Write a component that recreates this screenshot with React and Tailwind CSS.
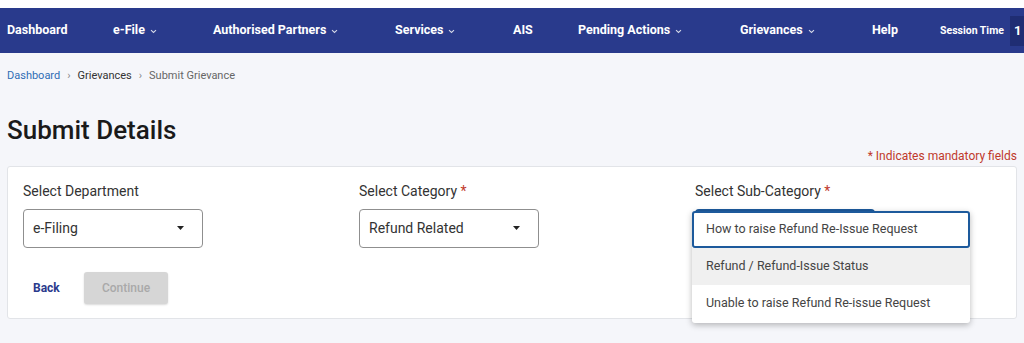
import React from "react";

const NAV = [
  { label: "Dashboard", x: "w-[106px]" },
  { label: "e-File", caret: true, x: "w-[100px]" },
  { label: "Authorised Partners", caret: true, x: "w-[182px]" },
  { label: "Services", caret: true, x: "w-[118px]" },
  { label: "AIS", x: "w-[65px]" },
  { label: "Pending Actions", caret: true, x: "w-[162px]" },
  { label: "Grievances", caret: true, x: "w-[132px]" },
  { label: "Help", x: "w-[68px]" },
];

function Caret() {
  return (
    <svg width="7" height="5" viewBox="0 0 7 5" className="ml-[5px] mt-[1px] opacity-80">
      <path d="M1 1.2l2.5 2.2L6 1.2" fill="none" stroke="currentColor" strokeWidth="1.1" />
    </svg>
  );
}

function SelectBox({ value }) {
  return (
    <div className="flex h-[39px] w-[180px] items-center justify-between rounded-[4px] border border-[#8f8f8f] bg-white pl-[9px] pr-[18px] text-[14px] text-[#333]">
      <span>{value}</span>
      <svg width="7" height="4" viewBox="0 0 7 4">
        <path d="M0 0h7L3.5 4z" fill="#222" />
      </svg>
    </div>
  );
}

export default function App() {
  return (
    <div className="h-[343px] w-[1024px] overflow-hidden bg-[#f5f6fa] font-['Roboto',sans-serif]">
      <div className="h-[8px] bg-white" />
      {/* top nav */}
      <nav className="flex h-[45px] items-center bg-[#293a8c] pl-[7px] text-[12.5px] font-bold text-white">
        {NAV.map((n) => (
          <div key={n.label} className={`flex shrink-0 items-center ${n.x}`}>
            <span>{n.label}</span>
            {n.caret && <Caret />}
          </div>
        ))}
        <span className="shrink-0 text-[10.5px]">Session Time</span>
        <span className="ml-[6px] flex h-[30px] shrink-0 items-center bg-[#1f2d73] px-[4px] text-[13px]">1</span>
      </nav>

      {/* breadcrumb */}
      <div className="flex items-center gap-[7px] pl-[7px] pt-[15px] text-[11px]">
        <span className="text-[#2f6db5]">Dashboard</span>
        <span className="text-[#888]">›</span>
        <span className="text-[#333]">Grievances</span>
        <span className="text-[#888]">›</span>
        <span className="text-[#666]">Submit Grievance</span>
      </div>

      <h1 className="pl-[7px] pt-[30px] text-[26px] font-medium leading-[30px] text-[#1a1a1a]">Submit Details</h1>

      <div className="flex justify-end pr-[7px] pt-[3px] text-[12px] leading-[16px] text-[#c0392b]">
        * Indicates mandatory fields
      </div>

      {/* card */}
      <div className="mx-[7px] mt-[2px] h-[153px] rounded-[3px] border border-[#e2e4e8] bg-white pl-[15px] pt-[14px]">
        <div className="grid grid-cols-[336px_336px_1fr]">
          <div>
            <div className="mb-[8px] text-[14px] leading-[20px] text-[#333]">Select Department</div>
            <SelectBox value="e-Filing" />
          </div>
          <div>
            <div className="mb-[8px] text-[14px] leading-[20px] text-[#333]">
              Select Category <span className="text-[#c0392b]">*</span>
            </div>
            <SelectBox value="Refund Related" />
          </div>
          <div>
            <div className="mb-[8px] text-[14px] leading-[20px] text-[#333]">
              Select Sub-Category <span className="text-[#c0392b]">*</span>
            </div>
            <div className="relative">
              <div className="h-[39px] w-[180px] rounded-[4px] border-2 border-[#1d5a9c] bg-white" />
              {/* open listbox */}
              <div className="absolute left-[-3px] top-[2px] z-10 w-[278px] rounded-[3px] bg-white text-[12.5px] text-[#444] shadow-[0_2px_6px_rgba(0,0,0,0.28)]">
                <div className="flex h-[37px] items-center rounded-[3px] border-2 border-[#1d5a9c] pl-[12px]">
                  How to raise Refund Re-Issue Request
                </div>
                <div className="flex h-[37px] items-center bg-[#f0f0f0] pl-[14px]">Refund / Refund-Issue Status</div>
                <div className="flex h-[38px] items-center pl-[14px]">Unable to raise Refund Re-issue Request</div>
              </div>
            </div>
          </div>
        </div>

        <div className="mt-[24px] flex items-center">
          <span className="ml-[10px] w-[51px] text-[12px] font-bold text-[#2b3a8c]">Back</span>
          <button className="h-[32px] w-[84px] rounded-[3px] bg-[#d6d6d6] text-[12px] font-medium text-[#a9a9a9] shadow-[0_1px_2px_rgba(0,0,0,0.15)]">
            Continue
          </button>
        </div>
      </div>
    </div>
  );
}
